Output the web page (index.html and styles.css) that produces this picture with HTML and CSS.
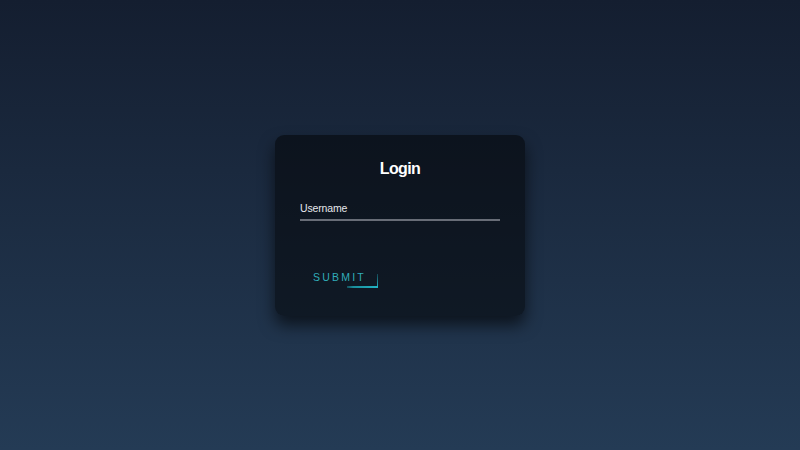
FILE: index.html
```html
<!DOCTYPE html>
<html lang="en">
<head>
<meta charset="utf-8">
<title>Login</title>
<link rel="stylesheet" href="styles.css">
</head>
<body>
  <main class="page">
    <form class="login-box" onsubmit="return false">
      <h2 class="login-title">Login</h2>
      <div class="user-box">
        <input class="user-input" type="text" placeholder="Username">
      </div>
      <div class="actions">
        <button class="submit" type="submit">
          <span class="line line-bottom"></span>
          <span class="line line-right"></span>
          SUBMIT
        </button>
      </div>
    </form>
  </main>
</body>
</html>
```
FILE: styles.css
```css
* {
  box-sizing: border-box;
}

html, body {
  margin: 0;
  height: 100%;
}

body {
  font-family: "Liberation Sans", Arial, sans-serif;
  background: linear-gradient(#141e30, #243b55);
}

.page {
  height: 100%;
  display: flex;
  align-items: center;
  justify-content: center;
}

.login-box {
  width: 250px;
  height: 181px;
  padding: 25px;
  margin-top: 1px;
  background: rgba(0, 0, 0, 0.5);
  border-radius: 9px;
  box-shadow: 0 9px 16px rgba(0, 0, 0, 0.6);
}

.login-title {
  margin: 0 0 17px;
  color: #fff;
  font-size: 16px;
  line-height: 18px;
  letter-spacing: -0.6px;
  font-weight: bold;
  text-align: center;
}

.user-box {
  margin-bottom: 43px;
}

.user-input {
  display: block;
  width: 100%;
  padding: 7px 0 5px;
  font: 10.5px/12px "Liberation Sans", Arial, sans-serif;
  letter-spacing: -0.15px;
  color: #fff;
  background: transparent;
  border: none;
  border-bottom: 2px solid #686d77;
  outline: none;
}

.user-input::placeholder {
  color: #e6e8ec;
  opacity: 1;
}

.actions {
  display: flex;
}

.submit {
  position: relative;
  padding: 7px 12px 5px 13px;
  font: 10.5px/12px "Liberation Sans", Arial, sans-serif;
  letter-spacing: 2.2px;
  color: #31adba;
  background: transparent;
  border: none;
  cursor: pointer;
}

/* animated border pieces, caught mid-run */
.line {
  position: absolute;
  display: block;
}

.line-bottom {
  right: 0;
  bottom: 0;
  width: 31px;
  height: 2px;
  background: linear-gradient(270deg, #22b4c4, #1a8e9c 80%, rgba(30, 160, 175, 0.4));
}

.line-right {
  right: 0;
  bottom: 0;
  width: 1px;
  height: 14px;
  background: linear-gradient(180deg, rgba(34, 180, 196, 0.3), #22b4c4);
}
```
